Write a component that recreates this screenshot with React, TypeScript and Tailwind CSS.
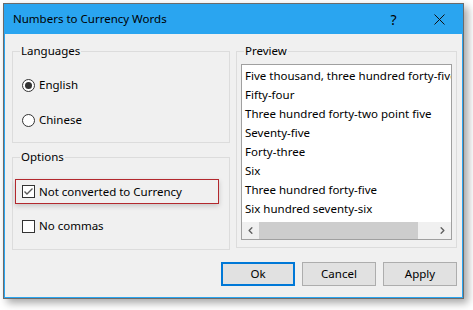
import { ChevronLeft, ChevronRight } from 'lucide-react'

const PREVIEW = [
  'Five thousand, three hundred forty-five',
  'Fifty-four',
  'Three hundred forty-two point five',
  'Seventy-five',
  'Forty-three',
  'Six',
  'Three hundred forty-five',
  'Six hundred seventy-six',
]

function Radio({ checked, label }: { checked?: boolean; label: string }) {
  return (
    <div className="flex h-[16px] items-center gap-[4px] pl-[9px]">
      <span className="flex h-[13px] w-[13px] items-center justify-center rounded-full border border-[#333333] bg-white">
        {checked && <span className="h-[7px] w-[7px] rounded-full bg-[#333333]" />}
      </span>
      <span>{label}</span>
    </div>
  )
}

function Checkbox({ checked }: { checked?: boolean }) {
  return (
    <span className="flex h-[13px] w-[13px] items-center justify-center border border-[#333333] bg-white">
      {checked && (
        <svg width="11" height="11" viewBox="0 0 11 11">
          <path d="M1.5 5.5 L4 8 L9.5 2.5" fill="none" stroke="#5a5a5a" strokeWidth="1.4" />
        </svg>
      )}
    </span>
  )
}

function Button({ label, primary }: { label: string; primary?: boolean }) {
  return (
    <button
      className={`flex h-[24px] w-[74px] items-center justify-center bg-[#e1e1e1] ${
        primary ? 'border-2 border-[#0078d7]' : 'border border-[#adadad]'
      }`}
    >
      {label}
    </button>
  )
}

export default function App() {
  return (
    <div className="h-[310px] w-[473px] bg-white pl-[3px] pt-[3px] font-['Noto_Sans',sans-serif] text-[11.5px] text-black">
      <div className="h-[296px] w-[461px] border border-[#6b6b6b] shadow-[4px_4px_8px_rgba(0,0,0,0.35)]">
        <div className="flex h-full flex-col bg-[#2aa5f0] px-px pb-px">
          {/* title bar */}
          <div className="flex h-[30px] shrink-0 items-center pl-[8px]">
            <span>Numbers to Currency Words</span>
            <span className="ml-auto flex h-full w-[45px] items-center justify-center text-[14px]">?</span>
            <span className="flex h-full w-[46px] items-center justify-center">
              <svg width="11" height="11" viewBox="0 0 11 11">
                <path d="M0.5 0.5 L10.5 10.5 M10.5 0.5 L0.5 10.5" stroke="#111" strokeWidth="1" />
              </svg>
            </span>
          </div>

          <div className="flex flex-1 flex-col bg-[#f0f0f0] pl-[7px] pr-[5px] pt-[9px]">
            <div className="flex gap-[6px]">
              <div className="flex w-[218px] shrink-0 flex-col gap-[6px]">
                <fieldset className="h-[100px] min-w-0 border border-[#dcdcdc]">
                  <legend className="ml-[7px] px-px leading-[16px]">Languages</legend>
                  <div className="mt-[18px]">
                    <Radio checked label="English" />
                  </div>
                  <div className="mt-[19px]">
                    <Radio label="Chinese" />
                  </div>
                </fieldset>

                <fieldset className="h-[101px] min-w-0 border border-[#dcdcdc]">
                  <legend className="ml-[7px] px-px leading-[16px]">Options</legend>
                  <div className="ml-[2px] mt-[14px] flex h-[25px] w-[204px] items-center gap-[4px] border border-[#b3282d] pl-[6px] shadow-[0_2px_5px_rgba(0,0,0,0.18)]">
                    <Checkbox checked />
                    <span>Not converted to Currency</span>
                  </div>
                  <div className="mt-[14px] flex h-[16px] items-center gap-[4px] pl-[9px]">
                    <Checkbox />
                    <span>No commas</span>
                  </div>
                </fieldset>
              </div>

              <fieldset className="h-[205px] min-w-0 flex-1 border border-[#dcdcdc] px-[4px] pb-[7px] pt-[5px]">
                <legend className="ml-[3px] px-px leading-[16px]">Preview</legend>
                <div className="flex h-[176px] flex-col overflow-hidden border border-[#a0a0a0] bg-white">
                  <div className="min-w-0 flex-1 overflow-hidden whitespace-nowrap pl-[3px] pt-px">
                    {PREVIEW.map((line) => (
                      <div key={line} className="leading-[19px]">
                        {line}
                      </div>
                    ))}
                  </div>
                  <div className="flex h-[17px] shrink-0 items-center bg-[#f0f0f0]">
                    <span className="flex w-[17px] justify-center text-[#606060]">
                      <ChevronLeft size={11} strokeWidth={3} />
                    </span>
                    <span className="h-full w-[159px] bg-[#cdcdcd]" />
                    <span className="ml-auto flex w-[17px] justify-center text-[#606060]">
                      <ChevronRight size={11} strokeWidth={3} />
                    </span>
                  </div>
                </div>
              </fieldset>
            </div>

            <div className="mt-[12px] flex justify-end gap-[7px]">
              <Button label="Ok" primary />
              <Button label="Cancel" />
              <Button label="Apply" />
            </div>
          </div>
        </div>
      </div>
    </div>
  )
}
